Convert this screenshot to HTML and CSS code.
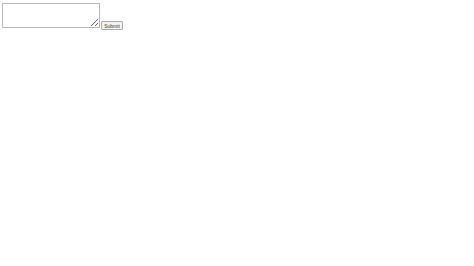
FILE: index.html
```html
<!DOCTYPE html>
<html>
<head>
<meta charset="utf-8">
<link rel="stylesheet" href="styles.css">
</head>
<body class="page">
<form class="form">
<textarea class="box"></textarea>
<button type="submit" class="btn">Submit</button>
</form>
</body>
</html>
```
FILE: styles.css
```css
.page { margin: 3px 2px; }
.form { zoom: 0.375; }
.box {
  box-sizing: border-box;
  width: 260px;
  height: 66px;
  border: 1px solid #b8b8b8;
  border-radius: 2px;
  vertical-align: baseline;
}
.btn {
  font-family: "Liberation Sans", Arial, sans-serif;
  font-size: 13.333px;
  color: #333;
  background: #f3f3f3;
  border: 1px solid #aaa;
  border-radius: 3px;
  padding: 1px 6px;
}
```
